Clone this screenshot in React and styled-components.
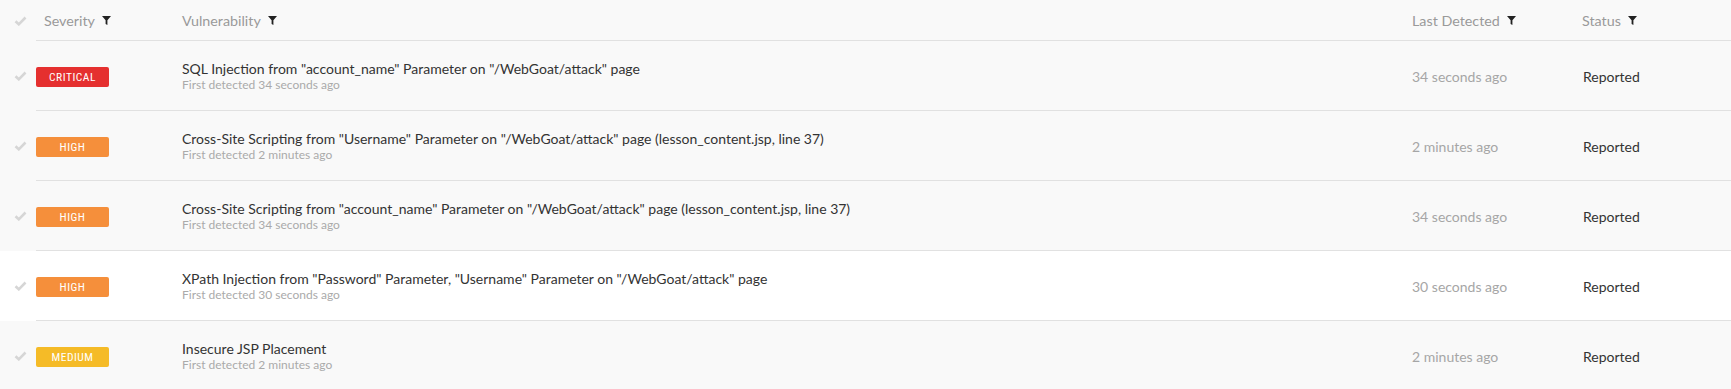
import React from "react";
import styled, { createGlobalStyle } from "styled-components";

const rows = [
  {
    severity: "CRITICAL",
    title: 'SQL Injection from "account_name" Parameter on "/WebGoat/attack" page',
    first: "First detected 34 seconds ago",
    last: "34 seconds ago",
    status: "Reported",
  },
  {
    severity: "HIGH",
    title:
      'Cross-Site Scripting from "Username" Parameter on "/WebGoat/attack" page (lesson_content.jsp, line 37)',
    first: "First detected 2 minutes ago",
    last: "2 minutes ago",
    status: "Reported",
  },
  {
    severity: "HIGH",
    title:
      'Cross-Site Scripting from "account_name" Parameter on "/WebGoat/attack" page (lesson_content.jsp, line 37)',
    first: "First detected 34 seconds ago",
    last: "34 seconds ago",
    status: "Reported",
  },
  {
    severity: "HIGH",
    title:
      'XPath Injection from "Password" Parameter, "Username" Parameter on "/WebGoat/attack" page',
    first: "First detected 30 seconds ago",
    last: "30 seconds ago",
    status: "Reported",
    hover: true,
  },
  {
    severity: "MEDIUM",
    title: "Insecure JSP Placement",
    first: "First detected 2 minutes ago",
    last: "2 minutes ago",
    status: "Reported",
  },
];

const badgeColors = {
  CRITICAL: "#e5302f",
  HIGH: "#f58f3b",
  MEDIUM: "#f5bb27",
};

function Check() {
  return (
    <svg width="13" height="10" viewBox="0 0 13 10">
      <path d="M1.5 5.2 L4.8 8.3 L11.5 1.5" fill="none" stroke="#d6d6d6" strokeWidth="2.6" />
    </svg>
  );
}

function Funnel() {
  return (
    <svg width="9" height="9" viewBox="0 0 9 9">
      <path d="M0 0 H9 L5.4 4.2 V9 L3.6 8 V4.2 Z" fill="#222" />
    </svg>
  );
}

export default function App() {
  return (
    <>
      <GlobalStyle />
      <Table>
        <Row>
          <CheckCell>
            <Check />
          </CheckCell>
          <Cells header>
            <HeadCell pad>
              Severity <Funnel />
            </HeadCell>
            <HeadCell>
              Vulnerability <Funnel />
            </HeadCell>
            <HeadCell>
              Last Detected <Funnel />
            </HeadCell>
            <HeadCell>
              Status <Funnel />
            </HeadCell>
          </Cells>
        </Row>
        {rows.map((r, i) => (
          <Row key={i} hover={r.hover}>
            <CheckCell>
              <Check />
            </CheckCell>
            <Cells>
              <Cell>
                <Badge color={badgeColors[r.severity]}>{r.severity}</Badge>
              </Cell>
              <Cell column>
                <Title>{r.title}</Title>
                <Sub>{r.first}</Sub>
              </Cell>
              <Cell>
                <Muted>{r.last}</Muted>
              </Cell>
              <Cell>
                <Status>{r.status}</Status>
              </Cell>
            </Cells>
          </Row>
        ))}
      </Table>
    </>
  );
}

const GlobalStyle = createGlobalStyle`
  body {
    margin: 0;
    background: #f9f9f9;
    font-family: Lato, "Open Sans", sans-serif;
  }
`;

const Table = styled.div`
  width: 1731px;
  height: 389px;
  overflow: hidden;
  background: #f9f9f9;
`;

const Row = styled.div`
  display: flex;
  background: ${(p) => (p.hover ? "#ffffff" : "transparent")};
`;

const CheckCell = styled.div`
  width: 36px;
  flex: none;
  display: flex;
  align-items: center;
  justify-content: center;
  padding-left: 4px;
  box-sizing: border-box;
`;

const Cells = styled.div`
  flex: 1;
  display: grid;
  grid-template-columns: 146px 1230px 170px 1fr;
  height: ${(p) => (p.header ? "40px" : "69px")};
  border-bottom: 1px solid #e1e1e1;
`;

const HeadCell = styled.div`
  display: flex;
  align-items: center;
  gap: 7px;
  padding-left: ${(p) => (p.pad ? "8px" : "0")};
  font-size: 14.3px;
  color: #9a9a9a;
`;

const Cell = styled.div`
  display: flex;
  flex-direction: ${(p) => (p.column ? "column" : "row")};
  justify-content: ${(p) => (p.column ? "center" : "flex-start")};
  align-items: ${(p) => (p.column ? "flex-start" : "center")};
`;

const Badge = styled.div`
  width: 73px;
  height: 20px;
  border-radius: 2px;
  background: ${(p) => p.color};
  color: #fff;
  display: flex;
  align-items: center;
  justify-content: center;
  font-family: "Liberation Sans Narrow", "Roboto Condensed", Roboto, sans-serif;
  font-size: 11.5px;
  font-weight: 400;
  letter-spacing: 0.5px;
  margin-top: 2px;
`;

const Title = styled.div`
  font-size: 14px;
  color: #333;
  line-height: 17px;
  margin-top: 1px;
`;

const Sub = styled.div`
  font-size: 12px;
  color: #aaa;
  line-height: 15px;
`;

const Muted = styled.div`
  font-size: 14px;
  color: #a6a6a6;
  margin-top: 1px;
`;

const Status = styled.div`
  font-size: 14px;
  color: #333;
  padding-left: 1px;
  margin-top: 1px;
`;
